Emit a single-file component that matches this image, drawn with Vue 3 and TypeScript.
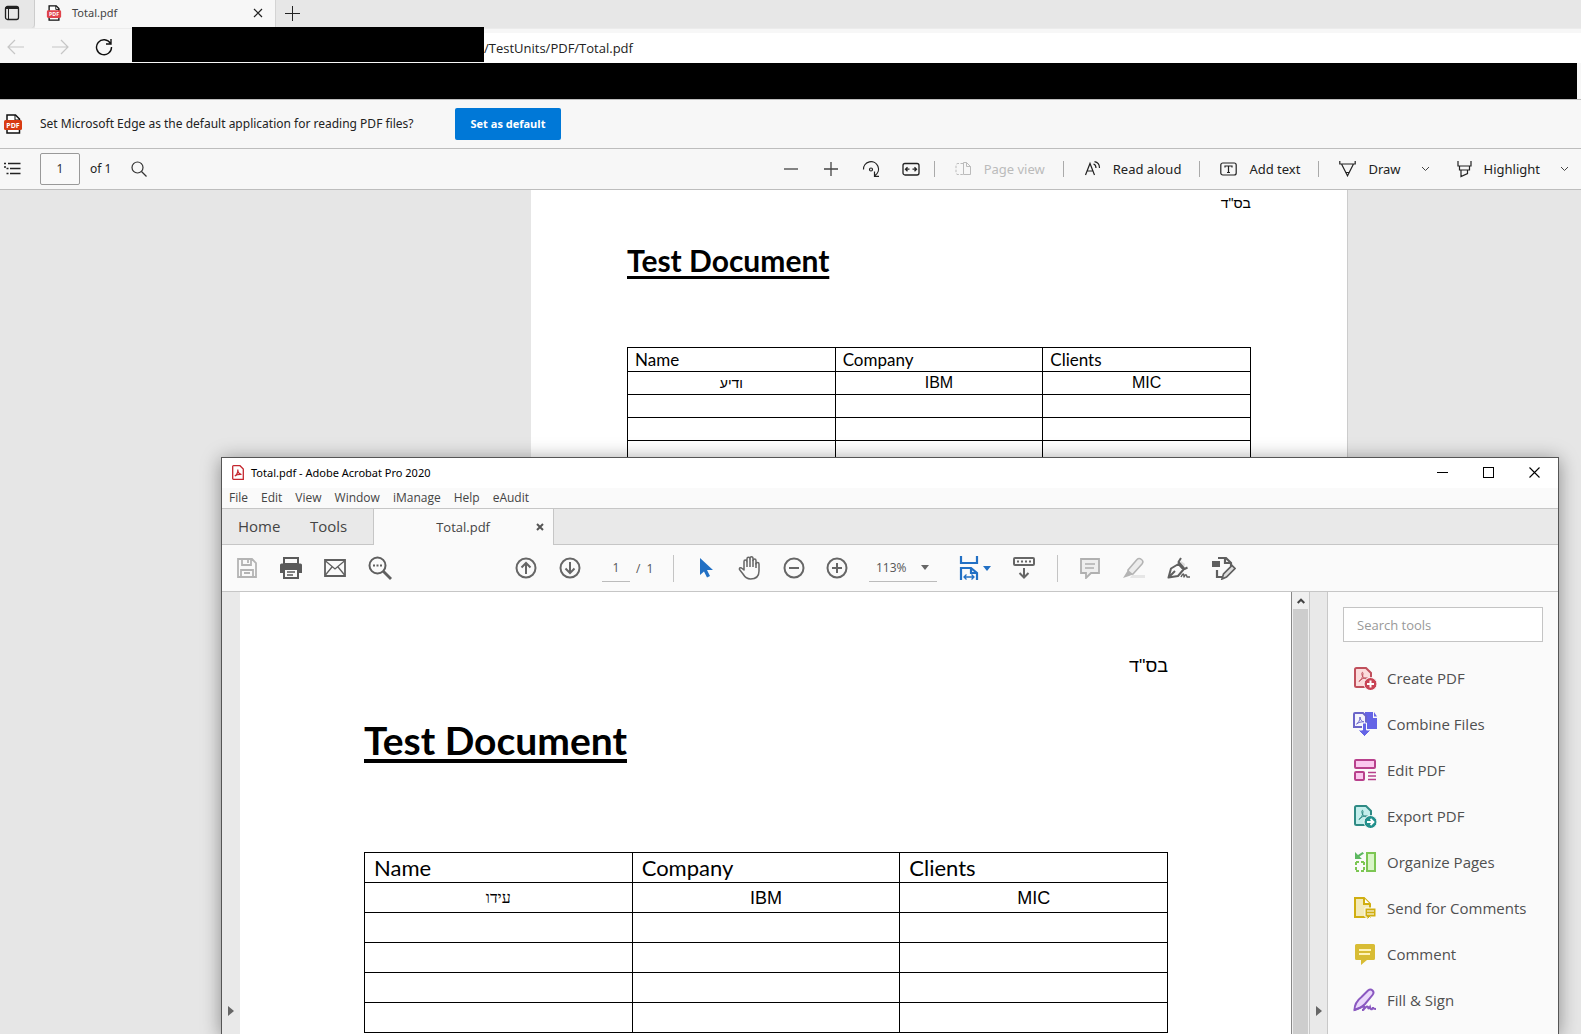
<script setup lang="ts">
import { ref } from 'vue'

interface Tool {
  label: string
  icon: string
}

const browserPage = ref('1')
const acrobatPage = ref('1')
const zoomLevel = ref('113%')
const search = ref('')

const menus: string[] = ['File', 'Edit', 'View', 'Window', 'iManage', 'Help', 'eAudit']
const columns: string[] = ['Name', 'Company', 'Clients']
const browserRow: string[] = ['ודיע', 'IBM', 'MIC']
const acrobatRow: string[] = ['עידו', 'IBM', 'MIC']

const glyph = 'M6 15.500c2-1 4-4.500 4-8c0-1.500-1.200-1.500-1.200 0c0 3 2.500 5.500 5.200 5.500c1.500 0 1.200-1.200-.5-1.200c-3 0-6 1.500-7.500 3.700z'

const tools: Tool[] = [
  {
    label: 'Create PDF',
    icon: `<path d="M2 3.500Q2 2 3.500 2H13l5 5v14H3.500Q2 21 2 19.500z" fill="#fbdcdc" stroke="#c0505c" stroke-width="2"/><path d="${glyph}" fill="none" stroke="#c0505c"/><circle cx="17.500" cy="18" r="6.500" fill="#c94455" stroke="#fafafa"/><path d="M14 18h7M17.500 14.500v7" stroke="#fff" stroke-width="2"/>`,
  },
  {
    label: 'Combine Files',
    icon: `<path d="M12 0h8v6h4v11H12z" fill="#6464e6"/><path d="M21 0l3 4.500h-3z" fill="#6464e6"/><path d="M1 2q0-1 1-1h8l3 3v11H1z" fill="#f4f4fd" stroke="#6a64c8" stroke-width="2"/><path d="M3.500 12c2-1 3.500-4 3.500-7c0 3 2 4.500 4 5c-3-.5-5.500.5-7.500 2z" fill="none" stroke="#6a64c8"/><path d="M9.500 11h4v7h4.500l-6.500 6.500l-6.500-6.500h4.500z" fill="#6464e6" stroke="#fafafa"/>`,
  },
  {
    label: 'Edit PDF',
    icon: `<rect x="2" y="2" width="20" height="8" rx="1" fill="#fbc8ee" stroke="#b8408c" stroke-width="2"/><rect x="2" y="14" width="9" height="8" rx="1" fill="#fbc8ee" stroke="#b8408c" stroke-width="2"/><path d="M15 14.500h8M15 18h8M15 21.500h8" stroke="#b8408c" stroke-width="1.300"/>`,
  },
  {
    label: 'Export PDF',
    icon: `<path d="M2 3.500Q2 2 3.500 2H13l5 5v14H3.500Q2 21 2 19.500z" fill="#c4eeec" stroke="#2e8a84" stroke-width="2"/><path d="${glyph}" fill="none" stroke="#2e8a84"/><circle cx="17.500" cy="18" r="6.500" fill="#22908c" stroke="#fafafa"/><path d="M14 18h6M17.500 15l3 3l-3 3" fill="none" stroke="#fff" stroke-width="1.800"/>`,
  },
  {
    label: 'Organize Pages',
    icon: `<rect x="14" y="3" width="8" height="18" fill="#d9f5c8" stroke="#7cc653" stroke-width="2"/><path d="M3 12h9M3 21h9M3 12v9M11 12v9" fill="none" stroke="#7cc653" stroke-width="2" stroke-dasharray="3 2"/><path d="M2 2v7h7L6.500 6.500L11 3.500L9.500 2L5 5z" fill="#5cb860"/>`,
  },
  {
    label: 'Send for Comments',
    icon: `<path d="M2 2h9l6 6v13H2z" fill="#f3eab8" stroke="#d0ae10" stroke-width="2"/><path d="M11 2v6h6" fill="#fff" stroke="#d0ae10" stroke-width="2"/><path d="M12 12h11v9h-6l-3 3v-3h-2z" fill="#d0ae10" stroke="#fafafa"/><path d="M14 15h7M14 18h7" stroke="#fff" stroke-width="1.200"/>`,
  },
  {
    label: 'Comment',
    icon: `<path d="M3.500 2h17q1.500 0 1.500 1.500v13q0 1.500-1.500 1.500H14l-6 5v-5H3.500Q2 18 2 16.500v-13Q2 2 3.500 2z" fill="#d8bc34"/><path d="M6 8h12M6 12h11" stroke="#fff3b8" stroke-width="1.800"/>`,
  },
  {
    label: 'Fill & Sign',
    icon: `<path d="M1.500 22C1.500 16 4 12.500 8.500 9L15 2.500q2.500-2 4.500 0t0 4.500L12 16c-3 3-6 5-10.500 6z" fill="#ead8fb" stroke="#8a58c0" stroke-width="2"/><path d="M1 22l8-3c3-3 3 3 0 3c3 0 4-5 6-3c0 2 1 2 2 0c1 4 3 2 3 0c0 2 1 2 3 2" fill="none" stroke="#8a58c0" stroke-width="2"/>`,
  },
]
</script>

<template>
  <div class="desktop">
    <header class="tabstrip">
      <button class="plain tabmenu" aria-label="Tab actions">
        <svg width="16" height="16" viewBox="0 0 16 16" fill="none" stroke="#222"><rect x="1.500" y="1.500" width="13" height="13" rx="2" stroke-width="1.300" /><path d="M1.500 3h13" stroke-width="2" /><path d="M4.500 4v10" /></svg>
      </button>
      <div class="tab">
        <svg width="16" height="16" viewBox="0 0 16 18"><path d="M2.500 1h8l3 3v13h-11z" fill="#fff" stroke="#111" stroke-width="1.500" /><path d="M10 1v4h4" fill="none" stroke="#111" /><rect x="0" y="6" width="16" height="8.500" rx="1.500" fill="#e0444c" /><text x="8" y="12.600" font-family="Open Sans, sans-serif" font-size="6" font-weight="700" fill="#fff" text-anchor="middle">PDF</text></svg>
        <span class="tabtitle">Total.pdf</span>
        <button class="plain" aria-label="Close tab"><svg width="10" height="10" viewBox="0 0 10 10" stroke="#222" stroke-width="1.200"><path d="M1 1l8 8M9 1L1 9" /></svg></button>
      </div>
      <button class="plain newtab" aria-label="New tab"><svg width="15" height="15" viewBox="0 0 15 15" stroke="#222"><path d="M7.500 0v15M0 7.500h15" /></svg></button>
    </header>

    <nav class="addressbar">
      <div class="navbuttons">
        <button class="plain" aria-label="Back"><svg width="18" height="16" viewBox="0 0 18 16" fill="none" stroke="#c6c6c6" stroke-width="1.200"><path d="M17 8H1M8 1L1 8l7 7" /></svg></button>
        <button class="plain" aria-label="Forward"><svg width="18" height="16" viewBox="0 0 18 16" fill="none" stroke="#c6c6c6" stroke-width="1.200"><path d="M1 8h16M10 1l7 7l-7 7" /></svg></button>
        <button class="plain" aria-label="Refresh"><svg width="18" height="18" viewBox="0 0 18 18" fill="none" stroke="#111" stroke-width="1.400"><path d="M15.500 5.500A7.500 7.500 0 1 0 16.500 9M16 1v5h-5" /></svg></button>
      </div>
      <div class="redacted"></div>
      <input class="url" aria-label="Address" value="/TestUnits/PDF/Total.pdf" />
    </nav>
    <div class="favorites"><div class="blackout"></div></div>

    <section class="infobar">
      <svg width="18" height="20" viewBox="0 0 18 20"><path d="M3 1h8.500l4 4v14H3z" fill="#fff" stroke="#111" stroke-width="1.500" /><path d="M11 1v5h5" fill="none" stroke="#111" /><rect x="0" y="6" width="18" height="10" rx="1.500" fill="#d83b12" /><text x="9" y="13.500" font-family="Open Sans, sans-serif" font-size="7" font-weight="700" fill="#fff" text-anchor="middle">PDF</text></svg>
      <span class="question">Set Microsoft Edge as the default application for reading PDF files?</span>
      <button class="default">Set as default</button>
    </section>

    <section class="pdfbar">
      <button class="plain contents" aria-label="Contents"><svg width="17" height="13" viewBox="0 0 17 13" stroke="#222" stroke-width="1.300"><path d="M4 1.500h12.500M6 6.500h10.500M6 11.500h10.500M0 1.500h2M2.500 6.500h2M2.500 11.500h2M0 5h2" /></svg></button>
      <input v-model="browserPage" class="pagebox" aria-label="Page number" />
      <span class="of">of 1</span>
      <button class="plain" aria-label="Find"><svg width="16" height="16" viewBox="0 0 16 16" fill="none" stroke="#333" stroke-width="1.200"><circle cx="6.500" cy="6.500" r="5.500" /><path d="M10.500 10.500l5 5" /></svg></button>
      <div class="actions">
        <button class="plain g22" aria-label="Zoom out"><svg width="18" height="18" viewBox="0 0 18 18" stroke="#444" stroke-width="1.300"><path d="M2 9h14" /></svg></button>
        <button class="plain g22" aria-label="Zoom in"><svg width="18" height="18" viewBox="0 0 18 18" stroke="#444" stroke-width="1.300"><path d="M2 9h14M9 2v14" /></svg></button>
        <button class="plain g22" aria-label="Rotate"><svg width="18" height="18" viewBox="0 0 18 18" fill="none" stroke="#222" stroke-width="1.200"><path d="M1.500 9.500A7.500 7.500 0 1 1 13 15.500M12.500 11.500v4.800h4.500" /><circle cx="9" cy="9.500" r="1.500" /></svg></button>
        <button class="plain g14" aria-label="Fit to width"><svg width="18" height="18" viewBox="0 0 18 18" fill="none" stroke="#222" stroke-width="1.300"><rect x="1" y="3.500" width="16" height="11.500" rx="2" /><path d="M3.500 9.200h4M10.500 9.200h4M5.500 7.200l-2 2l2 2M12.500 7.200l2 2l-2 2" /></svg></button>
        <i class="rule"></i>
        <button class="plain label dim"><svg width="17" height="14" viewBox="0 0 17 14" fill="none" stroke="#bbb"><path d="M8 1.500H3Q1 1.500 1 3.500v7q0 2 2 2h5" stroke-dasharray="2.500 1.500" /><path d="M8.500.5v12h7v-8l-4-4zM11.500.5v4h4" /></svg>Page view</button>
        <i class="rule"></i>
        <button class="plain label"><svg width="17" height="16" viewBox="0 0 17 16" fill="none" stroke="#222" stroke-width="1.200"><path d="M1.500 14L6 2.500L10.500 14M3 10h6M9.500 3c1.700.5 2.500 2 2.500 4M10.500.7c3 .5 5 3 5 6.300" /></svg>Read aloud</button>
        <i class="rule"></i>
        <button class="plain label"><svg width="17" height="14" viewBox="0 0 17 14" fill="none" stroke="#222" stroke-width="1.200"><rect x=".8" y="1" width="15.400" height="12" rx="2" /><path d="M5 5.500V4h7v1.500M8.500 4v6.500M7 10.500h3" /></svg>Add text</button>
        <i class="rule"></i>
        <button class="plain label draw"><svg width="17" height="17" viewBox="0 0 17 17" fill="none" stroke="#222" stroke-width="1.200"><path d="M.8 1v3h15.400V1M2.500 4L8.500 15.800L14.500 4M6.800 12.500h3.400" /></svg>Draw<svg width="9" height="6" viewBox="0 0 9 6" fill="none" stroke="#444"><path d="M1 1l3.500 3.500L8 1" /></svg></button>
        <button class="plain label draw"><svg width="15" height="18" viewBox="0 0 15 18" fill="none" stroke="#222" stroke-width="1.200"><path d="M1 1v5h13V1M2.500 6v4h10V6M4 10v6.500l6.500-3V10" /></svg>Highlight<svg width="9" height="6" viewBox="0 0 9 6" fill="none" stroke="#444"><path d="M1 1l3.500 3.500L8 1" /></svg></button>
      </div>
    </section>

    <main class="viewer">
      <article class="sheet">
        <p class="bsd" dir="rtl">בס"ד</p>
        <h1>Test Document</h1>
        <table>
          <thead><tr><th v-for="c in columns" :key="c">{{ c }}</th></tr></thead>
          <tbody>
            <tr><td v-for="c in browserRow" :key="c">{{ c }}</td></tr>
            <tr v-for="n in 5" :key="n"><td></td><td></td><td></td></tr>
          </tbody>
        </table>
      </article>
    </main>

    <section class="acrobat">
      <header class="titlebar">
        <svg width="12" height="15" viewBox="0 0 12 15"><path d="M.7 1.500Q.7.700 1.500.700H8l3.300 3.300v10.300H1.500Q.7 14.300.7 13.500z" fill="#fff" stroke="#c4262e" stroke-width="1.300" /><path d="M2.800 11c1.700-1 3.200-3.500 3-6.500c0 3 1.500 4.500 3.700 5c-2.500-.2-5 .3-6.700 1.500z" fill="none" stroke="#c4262e" stroke-width="1.200" /></svg>
        <span>Total.pdf - Adobe Acrobat Pro 2020</span>
        <div class="winbuttons">
          <button class="plain" aria-label="Minimize"><svg width="11" height="11" viewBox="0 0 11 11" stroke="#000"><path d="M0 5.500h11" /></svg></button>
          <button class="plain" aria-label="Maximize"><svg width="11" height="11" viewBox="0 0 11 11" fill="none" stroke="#000"><rect x=".5" y=".5" width="10" height="10" /></svg></button>
          <button class="plain" aria-label="Close"><svg width="11" height="11" viewBox="0 0 11 11" stroke="#000" stroke-width="1.100"><path d="M.5.5l10 10M10.500.5l-10 10" /></svg></button>
        </div>
      </header>
      <nav class="menubar"><button v-for="m in menus" :key="m" class="plain">{{ m }}</button></nav>
      <div class="doctabs">
        <button class="plain home">Home</button>
        <button class="plain toolstab">Tools</button>
        <div class="doctab">
          <span>Total.pdf</span>
          <button class="plain" aria-label="Close document"><svg width="8" height="8" viewBox="0 0 8 8" stroke="#555" stroke-width="2"><path d="M1 1l6 6M7 1L1 7" /></svg></button>
        </div>
      </div>
      <div class="toolbar">
        <div class="group files">
          <button class="plain" aria-label="Save"><svg width="22" height="22" viewBox="0 0 22 22" fill="none" stroke="#b4b4b4" stroke-width="1.800"><path d="M2 2h14l4 4v14H2zM6 2v6h9V2M5 20v-7h12v7M12 3v3M8 16h6" /></svg></button>
          <button class="plain" aria-label="Print"><svg width="22" height="22" viewBox="0 0 22 22"><path d="M4 1h14v6H4z" fill="#fafafa" stroke="#5a5a5a" stroke-width="2" /><path d="M0 8q0-1.500 1.500-1.500h19Q22 6.500 22 8v8H0z" fill="#5a5a5a" /><path d="M4 12h14v9H4z" fill="#fafafa" stroke="#5a5a5a" stroke-width="2" /><path d="M7 15h8M7 18h6" stroke="#5a5a5a" stroke-width="1.300" /></svg></button>
          <button class="plain" aria-label="Email"><svg width="22" height="18" viewBox="0 0 22 18" fill="none" stroke="#5f5f5f" stroke-width="1.800"><path d="M1 1h20v16H1z" /><path d="M1 1.500l10 8.500l10-8.500M1 16.500L8 8M21 16.500L14 8" stroke-width="1.300" /></svg></button>
          <button class="plain" aria-label="Search"><svg width="24" height="24" viewBox="0 0 24 24" fill="none" stroke="#5f5f5f" stroke-width="2"><circle cx="9.500" cy="9.500" r="8" /><path d="M15 15l8 8" stroke-width="2.800" /><path d="M5 9.500h2M8.500 9.500h2M12 9.500h2" stroke-width="1.800" /></svg></button>
        </div>
        <div class="group paging">
          <button class="plain" aria-label="Previous page"><svg width="22" height="22" viewBox="0 0 22 22" fill="none" stroke="#666" stroke-width="2"><circle cx="11" cy="11" r="9.500" /><path d="M11 17V6M6.500 10.500L11 6l4.500 4.500" /></svg></button>
          <button class="plain" aria-label="Next page"><svg width="22" height="22" viewBox="0 0 22 22" fill="none" stroke="#666" stroke-width="2"><circle cx="11" cy="11" r="9.500" /><path d="M11 5v11M6.500 11.500L11 16l4.500-4.500" /></svg></button>
        </div>
        <input v-model="acrobatPage" class="pageno" aria-label="Page" />
        <span class="total"><span>/</span><span>1</span></span>
        <i class="bar"></i>
        <div class="group view">
          <button class="plain" aria-label="Select"><svg width="22" height="22" viewBox="0 0 22 22"><path d="M5 1l13 12h-6l3 6l-3 1.500l-3-6L5 18z" fill="#2270c4" /></svg></button>
          <button class="plain" aria-label="Hand"><svg width="24" height="24" viewBox="0 0 24 24" fill="#fafafa" stroke="#666" stroke-width="1.500" stroke-linejoin="round"><path d="M6 14V5.500q0-1.500 1.300-1.500T9 5.500V2.800Q9 1.300 10.500 1.300T12 2.800q0-2 1.500-2T15 2.800v1.700q0-1.500 1.500-1.500T18 4.500V8q0-1.500 1.500-1.500T21 8v7q0 8-8.500 8Q8 23 5 18L1.500 13.500Q1 11 3.500 12z" /><path d="M9 5.500V11M12 2.800V11M15 4V11M18 7v5" /></svg></button>
          <button class="plain" aria-label="Zoom out"><svg width="22" height="22" viewBox="0 0 22 22" fill="none" stroke="#666" stroke-width="2"><circle cx="11" cy="11" r="9.500" /><path d="M6 11h10" /></svg></button>
          <button class="plain" aria-label="Zoom in"><svg width="22" height="22" viewBox="0 0 22 22" fill="none" stroke="#666" stroke-width="2"><circle cx="11" cy="11" r="9.500" /><path d="M6 11h10M11 6v10" /></svg></button>
        </div>
        <div class="zoomwrap">
          <select v-model="zoomLevel" class="zoom" aria-label="Zoom level"><option>113%</option></select>
          <svg width="8" height="5" viewBox="0 0 8 5"><path d="M0 0h8L4 5z" fill="#666" /></svg>
        </div>
        <div class="group fit">
          <button class="plain fitbtn" aria-label="Page display"><svg width="20" height="24" viewBox="0 0 20 24" fill="none" stroke="#2270c4" stroke-width="2.200"><path d="M2 0v7h16V0M2 24V12h10l6 5v7M12 12v5h6" /><path d="M5 21h10M7.500 18.500L5 21l2.500 2.500M12.500 18.500L15 21l-2.500 2.500" stroke-width="1.300" /></svg><svg width="8" height="5" viewBox="0 0 8 5"><path d="M0 0h8L4 5z" fill="#2270c4" /></svg></button>
          <button class="plain" aria-label="Reading mode"><svg width="22" height="24" viewBox="0 0 22 24" fill="none" stroke="#666" stroke-width="2"><rect x="1" y="2" width="20" height="7" rx="1" /><path d="M4 5.500h14" stroke-dasharray="2 2" /><path d="M11 12v9M6.500 17l4.500 4.500l4.500-4.500" /></svg></button>
        </div>
        <i class="bar"></i>
        <div class="group notes">
          <button class="plain" aria-label="Add comment"><svg width="22" height="22" viewBox="0 0 22 22" fill="#eee" stroke="#b0b0b0" stroke-width="1.800"><path d="M2 2h18v14h-8l-5 5v-5H2z" /><path d="M6 7h10M6 11h9" stroke-width="1.300" /></svg></button>
          <button class="plain" aria-label="Highlight text"><svg width="24" height="22" viewBox="0 0 24 22"><path d="M10 18h13v3H8z" fill="#e6e6e6" /><path d="M6 13L15 2.500q2-2 4.500 0t.5 4.500L11 17l-4 .5z" fill="#ececec" stroke="#b4b4b4" stroke-width="1.600" /><path d="M6 13l5 4l-4 2l-6 2z" fill="#b4b4b4" /></svg></button>
          <button class="plain" aria-label="Sign"><svg width="24" height="22" viewBox="0 0 24 22" fill="none" stroke="#5f5f5f" stroke-width="2" stroke-linejoin="round"><path d="M1.500 20.500L4 11.500L11.500 7l5 5.500L11 19zM1.500 20.500L8 14" /><path d="M14 4l4 3l-1 4l-4-4z" fill="#ddd" stroke="none" /><path d="M14 1l-2.500 4l6 7l3-1.500" /><path d="M14 20c2-4 3-4 3 0c1.500-3 2.500-3 3 0h3" stroke-width="1.500" /></svg></button>
          <button class="plain" aria-label="Edit document"><svg width="24" height="24" viewBox="0 0 24 24" fill="none" stroke="#5f5f5f" stroke-width="2.200"><path d="M6 2h8l5 5v3M13 2v5h6M5 14v7h5" /><path d="M0 5h8v6H0z" fill="#5f5f5f" stroke="none" /><path d="M10 23l1.500-5L20 9.500l3 3L14.500 21z" fill="#ddd" stroke-width="1.700" /></svg></button>
        </div>
      </div>
      <div class="content">
        <aside class="rail left"><svg width="6" height="10" viewBox="0 0 6 10"><path d="M0 0l6 5l-6 5z" fill="#666" /></svg></aside>
        <article class="paper">
          <p class="bsd" dir="rtl">בס"ד</p>
          <h2>Test Document</h2>
          <table>
            <thead><tr><th v-for="c in columns" :key="c">{{ c }}</th></tr></thead>
            <tbody>
              <tr><td v-for="c in acrobatRow" :key="c">{{ c }}</td></tr>
              <tr v-for="n in 4" :key="n"><td></td><td></td><td></td></tr>
            </tbody>
          </table>
        </article>
        <div class="scrollbar">
          <button class="plain" aria-label="Scroll up"><svg width="8" height="6" viewBox="0 0 8 6" fill="none" stroke="#444" stroke-width="2"><path d="M.7 5L4 1.700L7.300 5" /></svg></button>
          <div class="thumb"></div>
        </div>
        <div class="rail right"><svg width="6" height="10" viewBox="0 0 6 10"><path d="M0 0l6 5l-6 5z" fill="#666" /></svg></div>
        <aside class="panel">
          <input v-model="search" type="text" placeholder="Search tools" aria-label="Search tools" />
          <button v-for="t in tools" :key="t.label" class="plain tool">
            <svg width="24" height="24" viewBox="0 0 24 24" v-html="t.icon"></svg>{{ t.label }}
          </button>
        </aside>
      </div>
    </section>
  </div>
</template>

<style>
body { margin: 0; overflow: hidden; }
</style>

<style scoped>
.desktop { position: relative; display: flex; flex-direction: column; height: 100vh; overflow: hidden; background: #e6e6e6; font-family: "Open Sans", "Noto Sans", sans-serif; font-size: 13px; color: #222; }
.desktop * { box-sizing: border-box; }
.desktop > * { flex-shrink: 0; }
svg { display: block; flex: none; }
.plain { display: flex; align-items: center; padding: 0; border: 0; background: none; font: inherit; color: inherit; white-space: nowrap; }

.tabstrip { display: flex; height: 28px; background: #e7e7e7; }
.tabmenu { width: 35px; padding: 0 0 2px 4px; border-right: 1px solid #ccc; border-radius: 0 0 4px 0; }
.tab { display: flex; align-items: center; width: 241px; padding: 0 12px 3px 11px; background: #f7f7f7; border-right: 1px solid #d4d4d4; }
.tabtitle { flex: 1; margin-left: 10px; font-family: "Noto Sans", sans-serif; font-size: 11px; color: #444; }
.newtab { margin-left: 9px; padding-bottom: 2px; }

.addressbar { display: flex; height: 35px; background: #f7f7f7; border-top: 1px solid #ececec; }
.navbuttons { display: flex; align-items: center; gap: 26px; width: 132px; padding: 2px 0 0 7px; }
.redacted { width: 352px; height: 35px; margin-top: -2px; background: #000; }
.url { flex: 1; height: 30px; margin-top: 4px; padding: 0; border: 0; background: #fff; font: inherit; font-size: 13px; color: #222; }
.favorites { height: 36px; padding-right: 4px; background: #f7f7f7; }
.blackout { height: 36px; background: #000; }

.infobar { display: flex; align-items: center; height: 49px; padding: 0 0 1px 4px; background: #f7f7f7; border-top: 1px solid #bdbdbd; }
.question { width: 382px; margin-left: 18px; font-family: "Noto Sans", sans-serif; font-size: 12px; white-space: nowrap; }
.default { width: 106px; height: 32px; margin-left: 33px; padding: 0; border: 0; border-radius: 2px; background: #0078d7; color: #fff; font: 700 11px "Open Sans", sans-serif; }

.pdfbar { display: flex; align-items: center; height: 42px; padding: 0 12px 1px 4px; background: #f7f7f7; border-top: 1px solid #bdbdbd; border-bottom: 1px solid #bdbdbd; font-family: "Noto Sans", sans-serif; }
.pagebox { width: 40px; height: 32px; margin-left: 19px; padding: 0; border: 1px solid #999; border-radius: 2px; background: #f9f9f9; text-align: center; font: inherit; font-size: 12px; color: #333; }
.of { width: 41px; margin-left: 10px; font-size: 12px; }
.actions { display: flex; align-items: center; margin-left: auto; }
.g22 { margin-right: 22px; }
.g14 { margin-right: 14px; }
.rule { width: 1px; height: 16px; margin-right: 20px; background: #aaa; }
.label { gap: 12px; margin-right: 18px; }
.dim { color: #bbb; }
.draw { margin-right: 27px; }
.draw svg:last-child { margin-left: 8px; }
.draw:last-child { margin-right: 0; }

.viewer { flex: 1; overflow: hidden; }
.sheet { width: 817px; min-height: 600px; margin-left: 531px; padding: 0 96px; background: #fff; border-right: 1px solid #ccc; color: #000; font-family: Lato, sans-serif; }
.bsd { margin: 0; font-family: "Liberation Sans", sans-serif; font-size: 14px; line-height: 26px; }
h1, h2 { margin: 0; font-weight: 700; text-decoration: underline; text-decoration-thickness: 3px; text-underline-offset: 4px; text-decoration-skip-ink: none; }
h1 { padding-top: 24px; font-size: 30px; line-height: 40px; }
table { width: 100%; border-collapse: collapse; table-layout: fixed; color: #000; }
th, td { padding: 0; border: 1px solid #000; }
th { font-weight: 400; text-align: left; }
td { font-family: "Liberation Sans", sans-serif; text-align: center; }
.sheet table { margin-top: 67px; }
.sheet tr { height: 23px; }
.sheet thead tr { height: 24px; }
.sheet th { padding-left: 7px; font-size: 17px; line-height: 20px; }
.sheet td { font-size: 16px; line-height: 20px; }
.sheet td:first-child { font-size: 14px; }

.acrobat { position: absolute; top: 457px; right: 22px; bottom: -1px; left: 221px; display: flex; flex-direction: column; border: 1px solid #555; background: #fafafa; box-shadow: 0 2px 18px rgba(0, 0, 0, 0.4); }
.titlebar { display: flex; align-items: center; height: 30px; padding: 0 0 2px 10px; background: #fff; font-family: "Noto Sans", sans-serif; font-size: 11px; color: #000; gap: 7px; }
.winbuttons { display: flex; gap: 35px; margin: 0 18px 0 auto; }
.menubar { display: flex; align-items: center; gap: 13px; height: 20px; padding: 0 0 2px 7px; font-size: 12px; color: #444; }
.doctabs { display: flex; height: 37px; background: #e9e9e9; border: 1px solid #c6c6c6; border-width: 1px 0; color: #444; }
.home, .toolstab { padding-bottom: 1px; font-size: 15px; }
.home { width: 72px; padding-left: 16px; }
.toolstab { width: 79px; padding-left: 16px; }
.doctab { display: flex; align-items: center; justify-content: flex-end; gap: 46px; width: 181px; height: 36px; padding-right: 9px; background: #fafafa; border: 1px solid #c6c6c6; border-width: 0 1px; }
.toolbar { display: flex; align-items: center; height: 47px; padding-left: 14px; border-bottom: 1px solid #c6c6c6; color: #555; font-size: 12px; }
.group { display: flex; align-items: center; gap: 22px; }
.files { width: 279px; }
.pageno { width: 28px; height: 28px; margin-left: 21px; padding: 0; border: 0; border-bottom: 1px solid #bbb; background: none; text-align: center; font: inherit; color: inherit; }
.total { display: flex; gap: 6px; width: 37px; margin-left: 6px; }
.bar { width: 1px; height: 27px; background: #c4c4c4; }
.view { margin-left: 21px; gap: 21px; }
.zoomwrap { display: flex; align-items: center; width: 68px; height: 28px; margin-left: 21px; border-bottom: 1px solid #bbb; }
.zoom { width: 52px; padding: 0 0 0 7px; border: 0; background: none; appearance: none; font: inherit; font-size: 12px; color: inherit; }
.fit { margin: 0 22px 0 22px; }
.fitbtn { gap: 4px; }
.notes { margin-left: 21px; gap: 21px; }

.content { display: flex; flex: 1; overflow: hidden; }
.rail { flex: none; display: flex; align-items: flex-end; justify-content: center; width: 18px; padding-bottom: 18px; background: #e9e9e9; }
.right { border-left: 1px solid #c8c8c8; }
.paper { flex: 1; padding: 59px 123px 0 124px; background: #fff; border-right: 1px solid #888; color: #000; font-family: Lato, sans-serif; }
.paper .bsd { font-size: 18px; line-height: 30px; }
h2 { padding-top: 35px; font-size: 39px; line-height: 48px; text-decoration-thickness: 4px; }
.paper table { margin-top: 88px; }
.paper tr { height: 30px; }
.paper th { padding-left: 9px; font-size: 22px; line-height: 26px; }
.paper td { font-size: 18px; line-height: 26px; }
.paper td:first-child { font-family: "Liberation Serif", serif; font-size: 16px; }
.scrollbar { display: flex; flex-direction: column; flex: none; width: 17px; background: #f0f0f0; }
.scrollbar .plain { justify-content: center; height: 17px; }
.thumb { flex: 1; margin: 0 1px; background: #cdcdcd; }
.panel { flex: none; width: 231px; padding: 15px; border-left: 1px solid #c8c8c8; background: #fafafa; }
.panel input { display: block; width: 100%; height: 35px; margin-bottom: 13px; padding: 0 13px; border: 1px solid #c4c4c4; border-radius: 0; background: #fff; font: inherit; font-size: 13px; }
.panel input::placeholder { color: #999; opacity: 1; }
.tool { gap: 10px; width: 100%; height: 46px; padding-left: 10px; font-size: 15px; color: #505050; }
</style>
